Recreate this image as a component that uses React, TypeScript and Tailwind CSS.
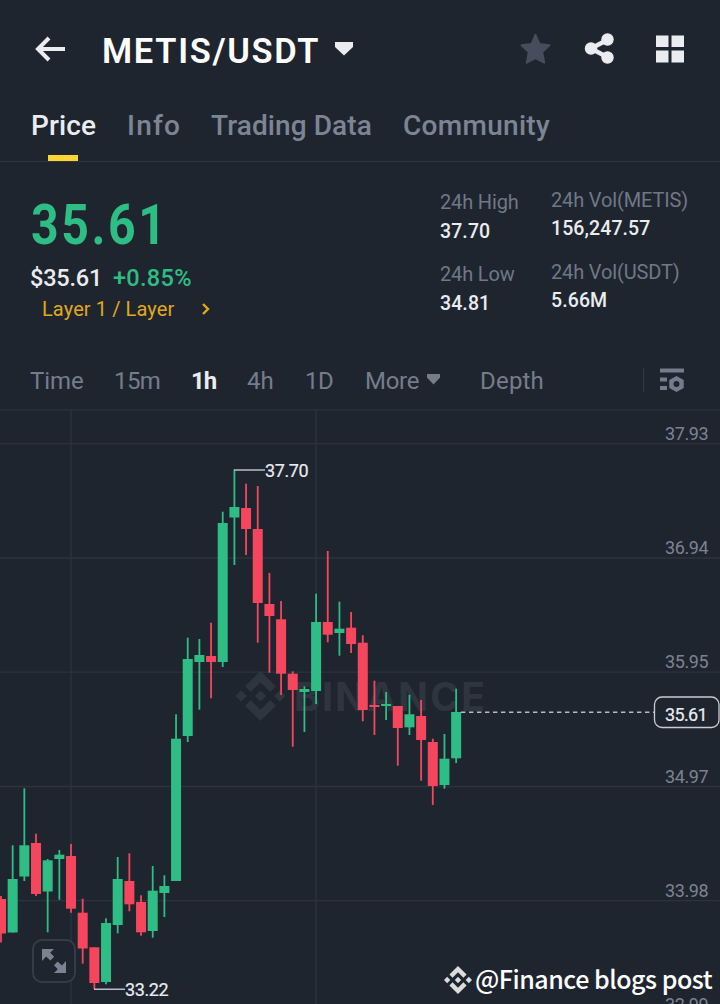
import clsx from "clsx";
import { SiBinance } from "react-icons/si";

const GREEN = "#2ebd85";
const RED = "#f6465d";
const GRID = "#2d333e";

// [high, bodyTop, bodyBottom, low, up]
type Candle = [number, number, number, number, boolean];

const candles: Candle[] = [
  [896, 899, 933.5, 942.5, false],
  [845.3, 879, 932.5, 932.5, true],
  [788.3, 845.3, 876.5, 881, true],
  [833.7, 843, 894, 896, false],
  [859, 860.3, 891.5, 932.3, true],
  [850, 854.7, 859, 899.7, true],
  [844, 856, 908.7, 912.7, false],
  [898.7, 912.7, 948.5, 963.7, false],
  [947.3, 947.3, 983, 989, false],
  [918.3, 923, 982, 984.3, true],
  [857, 879, 925, 933.3, true],
  [853.3, 881, 904.3, 911.3, false],
  [895.3, 902, 932.3, 935.7, false],
  [866, 890.7, 931, 937.7, true],
  [875.3, 886, 893, 917, true],
  [714.3, 738.7, 881, 881, true],
  [637.7, 659, 736, 742, true],
  [639, 655, 662, 709.7, true],
  [622.7, 656, 662, 698.3, false],
  [511.7, 523, 662, 667, true],
  [469.5, 507, 517.5, 565, true],
  [483.7, 508, 529, 555, false],
  [486, 529, 603, 642.7, false],
  [573, 604, 616, 672.7, false],
  [601, 619.3, 673.7, 695, false],
  [671.3, 673.7, 690, 746.7, false],
  [686.3, 689, 692, 732, true],
  [593.7, 622, 691, 704, true],
  [551, 622, 634.7, 642.3, false],
  [601.7, 628.7, 633, 655.7, true],
  [612, 627.7, 644, 653, false],
  [635.3, 642.7, 710, 721.3, false],
  [680.7, 705, 707, 735, false],
  [692, 704, 706, 720, true],
  [706, 706, 728, 765.7, false],
  [694.7, 714.3, 727.3, 735, true],
  [700, 716, 740, 780.7, false],
  [738.7, 742, 786, 805, false],
  [734, 758.7, 785, 788.7, true],
  [688.7, 712, 758.3, 763, true],
];

const levels = [
  { y: 443.7, label: "37.93" },
  { y: 558, label: "36.94" },
  { y: 672.2, label: "35.95" },
  { y: 786.5, label: "34.97" },
  { y: 900.7, label: "33.98" },
  { y: 1014.5, label: "32.99" },
];

const tabs = [
  { label: "Price", cls: "w-24 text-[#eaecef] tracking-[0.1px]" },
  { label: "Info", cls: "w-[84px] tracking-[1.2px]" },
  { label: "Trading Data", cls: "w-48 tracking-[0.1px]" },
  { label: "Community", cls: "tracking-[0.3px]" },
];

const intervals = [
  { label: "Time", cls: "w-[84px] tracking-[-0.1px]" },
  { label: "15m", cls: "w-[77px] tracking-[-0.6px]" },
  { label: "1h", cls: "w-14 font-bold tracking-[-1px] text-[#eaecef]" },
  { label: "4h", cls: "w-[58px]" },
  { label: "1D", cls: "w-[60px] tracking-[-0.4px]" },
];

function Stat({ label, value }: { label: string; value: string }) {
  return (
    <div>
      <div className="text-[20px] leading-7 tracking-[-0.15px] text-[#707887]">{label}</div>
      <div className="relative top-[1.5px] text-[19.5px] leading-7 font-medium tracking-[0.1px] text-[#eaecef]">
        {value}
      </div>
    </div>
  );
}

function Header() {
  return (
    <header className="flex h-[100px] items-center pl-[34px] pr-9 text-[#eaecef]">
      <svg className="-mt-0.5 h-8 w-8" viewBox="0 0 32 32" fill="none" stroke="currentColor" strokeWidth="4">
        <path d="M31 16H3.500M15 5L4 16l11 11" />
      </svg>
      <h1 className="mt-0.5 ml-9 w-[233px] whitespace-nowrap text-[34.5px] leading-10 font-semibold tracking-[1.65px] text-white">
        METIS/USDT
      </h1>
      <svg className="-mt-0.5 h-[14px] w-[18px]" viewBox="0 0 18 14" fill="currentColor">
        <path d="M0 0h18v5L9 13.5 0 5z" />
      </svg>
      <svg className="-mt-1 ml-auto h-[31px] w-[31px]" viewBox="0 0 31 31" fill="#474d5c" stroke="#474d5c" strokeWidth="2" strokeLinejoin="round">
        <path d="M15.500 1.800l3.900 9.200 10 1.300-7.200 6.800 2 10.600-8.700-4.600-8.700 4.600 2-10.600-7.200-6.800 10-1.300z" />
      </svg>
      <svg className="-mt-1 ml-[33px] h-[31px] w-[31px]" viewBox="0 0 31 31" fill="currentColor">
        <path d="M24 6.5L7 15.5l17 9" fill="none" stroke="currentColor" strokeWidth="4.500" />
        <circle cx="7" cy="15.5" r="6.2" />
        <circle cx="23.5" cy="6.5" r="6.2" />
        <circle cx="23.5" cy="24.5" r="6.2" />
      </svg>
      <svg className="-mt-0.5 ml-[41px] h-7 w-7" viewBox="0 0 28 28" fill="currentColor">
        <path d="M0 .5h12.5V12H0zM15.5.5H28V12H15.5zM0 15.5h12.5v12H0zM15.5 15.5H28v12H15.5z" />
      </svg>
    </header>
  );
}

function Chart() {
  return (
    <svg className="block h-[595px] w-full" viewBox="0 409 720 595">
      <g stroke={GRID} strokeWidth="1.3">
        <path d="M0 409.8H720M71 410V1004M316 410V1004" />
        {levels.map((l) => (
          <path key={l.label} d={`M0 ${l.y}H720`} />
        ))}
      </g>

      {/* watermark */}
      <SiBinance x="235.5" y="671" size={50} color="#2f353f" />
      <text x="294" y="710.5" textLength="191" fontSize="39" fontWeight="700" fill="#2f353f" className="font-['Inter',sans-serif]">
        BINANCE
      </text>

      {candles.map(([high, top, bottom, low, up], i) => {
        const x = 1 + i * 11.67;
        return (
          <g key={i} fill={up ? GREEN : RED}>
            <rect x={x - 0.9} y={high} width="1.8" height={low - high} />
            <rect x={x - 5} y={top} width="10" height={bottom - top} />
          </g>
        );
      })}

      {/* high / low markers */}
      <path d="M234 470H265M94 989.3H125" stroke="#b7bdc6" strokeWidth="1.4" />
      <g fontSize="18" fill="#eaecef" stroke="#eaecef" strokeWidth="0.2">
        <text x="265" y="477" textLength="43.5">37.70</text>
        <text x="125" y="996" textLength="43.5">33.22</text>
      </g>

      <g fontSize="18" fill="#7b8392">
        {levels.map((l) => (
          <text key={l.label} x="665" y={l.y - 4} textLength="43.5">
            {l.label}
          </text>
        ))}
      </g>

      {/* last price */}
      <path d="M461 712.3H654" stroke="#b7bdc6" strokeWidth="1.4" strokeDasharray="4.4 3.6" />
      <rect x="654.5" y="697" width="64.5" height="30.5" rx="7.5" fill="#1f252f" stroke="#c8ccd3" strokeWidth="1.3" />
      <text x="665" y="721" textLength="42.5" fontSize="18" fill="#eaecef" stroke="#eaecef" strokeWidth="0.2">
        35.61
      </text>
    </svg>
  );
}

export default function App() {
  return (
    <div className="relative h-[1004px] w-[720px] overflow-hidden bg-[#1f252f] font-['Roboto',sans-serif] text-[#848e9c]">
      <Header />

      <nav className="flex h-[62px] border-b border-[#2f3641] pl-[31px] text-[28px] leading-[52px] font-medium text-[#7d8594]">
        {tabs.map((t, i) => (
          <div key={t.label} className={clsx("relative shrink-0 whitespace-nowrap", t.cls)}>
            {t.label}
            {i === 0 && <span className="absolute top-[55px] left-[17px] h-1.5 w-[30px] bg-[#fcd535]" />}
          </div>
        ))}
      </nav>

      <section className="flex h-[188px]">
        <div className="w-[440px] pt-[34px] pl-[31px]">
          <div className="h-14 origin-left scale-x-[0.86] text-[56px] leading-[58px] font-bold tracking-[3px] text-[#2ebd85]">
            35.61
          </div>
          <div className="mt-2.5 -ml-px flex h-8 text-[23.5px] leading-8 font-medium">
            <span className="w-[83px] tracking-[-0.2px] text-[#eaecef]">$35.61</span>
            <span className="tracking-[0.3px] text-[#2ebd85]">+0.85%</span>
          </div>
          <div className="ml-[11px] flex h-8 items-center text-[20px] text-[#e0a91d]">
            <span className="-mt-0.5 w-[160px] tracking-[0.1px]">Layer 1 / Layer</span>
            <svg className="-mt-0.5 h-3 w-2" viewBox="0 0 8 12" fill="none" stroke="currentColor" strokeWidth="2.4">
              <path d="M1 1l5 5-5 5" />
            </svg>
          </div>
        </div>
        <div className="flex w-[111px] flex-col gap-4 pt-[26px]">
          <Stat label="24h High" value="37.70" />
          <Stat label="24h Low" value="34.81" />
        </div>
        <div className="flex flex-col gap-4 pt-[23.5px]">
          <Stat label="24h Vol(METIS)" value="156,247.57" />
          <Stat label="24h Vol(USDT)" value="5.66M" />
        </div>
      </section>

      <div className="flex h-[59px] items-center pt-0.5 pr-9 pl-[30px] text-[24px] leading-8 text-[#757d8c]">
        {intervals.map((t) => (
          <span key={t.label} className={clsx("shrink-0", t.cls)}>
            {t.label}
          </span>
        ))}
        <span className="w-[62px] tracking-[-0.3px]">More</span>
        <svg className="-mt-0.5 h-[11px] w-[13px]" viewBox="0 0 13 11" fill="currentColor">
          <path d="M0 0h13v3.5L6.5 10.5 0 3.5z" />
        </svg>
        <span className="ml-10 tracking-[0.2px]">Depth</span>
        <span className="-mt-0.5 mr-4 ml-auto h-6 w-px bg-[#333a46]" />
        <svg className="-mt-0.5 h-6 w-6" viewBox="0 0 24 24" fill="currentColor">
          <path d="M0 .5h24v4H0zM0 9.500h7v4H0zM0 18h7v4H0z" />
          <path fillRule="evenodd" d="M16.500 8l7.200 4v8l-7.200 4-7.200-4v-8zM16.500 13a3 3 0 1 0 0 6 3 3 0 0 0 0-6z" />
        </svg>
      </div>

      <Chart />

      {/* fullscreen toggle */}
      <button className="absolute top-[939px] left-8 flex h-11 w-11 items-center justify-center rounded-[10px] border-2 border-[#353b47] bg-[#1f252f]">
        <svg className="h-6 w-6" viewBox="0 0 24 24" fill="#7b8392">
          <path d="M0 0h12L8.200 3.800l4 4-3.800 3.800-4.300-4.200L0 12z" />
          <path d="M24 24H12l3.800-3.800-3.800-4 3.600-3.800 4.300 4.200L24 12z" />
        </svg>
      </button>

      <div className="absolute top-[963px] left-[444px] flex items-center gap-[3px] font-['Noto_Sans_CJK_SC',sans-serif] text-[25px] leading-9 font-medium tracking-[-0.48px] whitespace-nowrap text-white">
        <SiBinance className="h-7 w-7 shrink-0 text-[#dcdcdc]" />
        <span className="-mt-[3px]">@Finance blogs post</span>
      </div>
    </div>
  );
}
